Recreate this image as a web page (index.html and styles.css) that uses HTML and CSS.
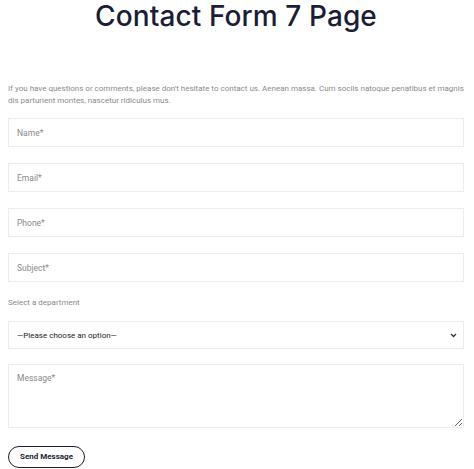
FILE: index.html
```html
<!DOCTYPE html>
<html lang="en">
<head>
    <meta charset="UTF-8">
    <meta name="viewport" content="width=device-width, initial-scale=1.0">
    <title>Contact Form 7 Page</title>
    <link rel="stylesheet" href="styles.css">
</head>
<body>
    <div class="page">
        <h1 class="page-title">Contact Form 7 Page</h1>

        <p class="intro">If you have questions or comments, please don't hesitate to contact us. Aenean massa. Cum sociis natoque penatibus et magnis dis parturient montes, nascetur ridiculus mus.</p>

        <form class="contact-form">
            <input class="field" type="text" placeholder="Name*">
            <input class="field" type="email" placeholder="Email*">
            <input class="field" type="tel" placeholder="Phone*">
            <input class="field" type="text" placeholder="Subject*">

            <label class="field-label" for="department">Select a department</label>
            <div class="select-wrap">
                <select class="field select" id="department">
                    <option>—Please choose an option—</option>
                    <option>Sales</option>
                    <option>Support</option>
                </select>
                <svg class="select-arrow" width="7" height="5" viewBox="0 0 7 5">
                    <path d="M1 1 L3.5 3.5 L6 1" fill="none" stroke="#333" stroke-width="1.3"/>
                </svg>
            </div>

            <textarea class="field message" placeholder="Message*"></textarea>

            <div class="actions">
                <button class="send-btn" type="submit">Send Message</button>
            </div>
        </form>
    </div>
</body>
</html>
```

FILE: styles.css
```css
* {
    margin: 0;
    padding: 0;
    box-sizing: border-box;
}

body {
    font-family: Roboto, "Liberation Sans", sans-serif;
    background: #fff;
    color: #888;
}

.page {
    padding: 0 10px 0 8px;
}

.page-title {
    font-family: Inter, "Noto Sans", sans-serif;
    font-weight: 500;
    font-size: 28px;
    line-height: 32px;
    color: #1b1d36;
    text-align: center;
    letter-spacing: 0.1px;
}

.intro {
    margin-top: 51px;
    font-size: 8px;
    line-height: 12px;
    color: #8a8a8a;
}

.contact-form {
    display: flex;
    flex-direction: column;
    margin-top: 11px;
}

.field {
    display: block;
    width: 100%;
    height: 29px;
    border: 1px solid #ececec;
    background: #fff;
    padding: 0 8px;
    font-family: Roboto, "Liberation Sans", sans-serif;
    font-size: 8.5px;
    color: #333;
    outline: none;
    margin-bottom: 16px;
}

.field::placeholder {
    color: #8a8a8a;
}

.field-label {
    font-size: 8px;
    line-height: 12px;
    color: #8a8a8a;
    margin: -1px 0 12px;
}

.select-wrap {
    position: relative;
    margin-bottom: 15px;
}

.select {
    appearance: none;
    -webkit-appearance: none;
    height: 28px;
    font-size: 8px;
    color: #1a1a1a;
    border-radius: 0;
    margin-bottom: 0;
}

.select-arrow {
    position: absolute;
    right: 7px;
    top: 12px;
    pointer-events: none;
}

.message {
    height: 64px;
    padding-top: 8px;
    resize: vertical;
}

.send-btn {
    font-family: Roboto, "Liberation Sans", sans-serif;
    font-weight: 700;
    font-size: 8px;
    color: #1b1d36;
    background: #fff;
    border: 1.5px solid #1b1d36;
    border-radius: 12px;
    height: 22px;
    width: 77px;
    cursor: pointer;
}
```
